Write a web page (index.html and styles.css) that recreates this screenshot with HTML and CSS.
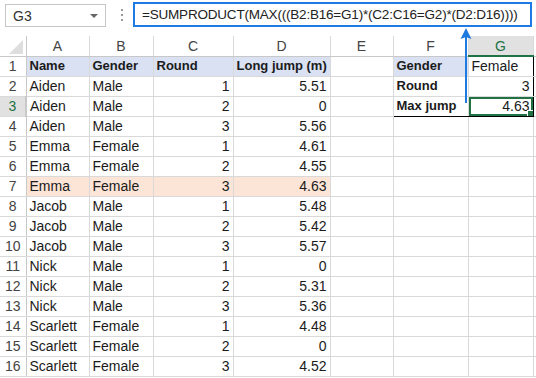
FILE: index.html
```html
<!DOCTYPE html>
<html lang="en">
<head>
    <meta charset="UTF-8">
    <title>Max jump</title>
    <link rel="stylesheet" href="styles.css">
</head>
<body>

<div class="formula-bar">
    <div class="name-box">G3<span class="drop"></span></div>
    <div class="dots"><span></span><span></span><span></span></div>
    <div class="formula">=SUMPRODUCT(MAX(((B2:B16=G1)*(C2:C16=G2)*(D2:D16))))</div>
</div>

<div class="sheet">
<table class="grid">
    <colgroup>
        <col class="c-hdr"><col class="c-a"><col class="c-b"><col class="c-c"><col class="c-d">
        <col class="c-e"><col class="c-f"><col class="c-g"><col class="c-h">
    </colgroup>
    <tr class="col-head">
        <th class="corner"><span></span></th><th>A</th><th>B</th><th>C</th><th>D</th><th>E</th><th>F</th><th class="active-col">G</th><th></th>
    </tr>
    <tr class="head-row">
        <th>1</th><td class="b">Name</td><td class="b">Gender</td><td class="b">Round</td><td class="b">Long jump (m)</td><td class="plain"></td>
        <td class="box b box-top box-left">Gender</td><td class="box box-top box-right">Female</td><td></td>
    </tr>
    <tr>
        <th>2</th><td>Aiden</td><td>Male</td><td class="n">1</td><td class="n">5.51</td><td></td>
        <td class="box b box-left">Round</td><td class="box n box-right">3</td><td></td>
    </tr>
    <tr>
        <th class="active-row">3</th><td>Aiden</td><td>Male</td><td class="n">2</td><td class="n">0</td><td></td>
        <td class="box b box-left box-bottom">Max jump</td><td class="box n box-right box-bottom selected">4.63<span class="handle"></span></td><td></td>
    </tr>
    <tr><th>4</th><td>Aiden</td><td>Male</td><td class="n">3</td><td class="n">5.56</td><td></td><td></td><td></td><td></td></tr>
    <tr><th>5</th><td>Emma</td><td>Female</td><td class="n">1</td><td class="n">4.61</td><td></td><td></td><td></td><td></td></tr>
    <tr><th>6</th><td>Emma</td><td>Female</td><td class="n">2</td><td class="n">4.55</td><td></td><td></td><td></td><td></td></tr>
    <tr class="match"><th>7</th><td>Emma</td><td>Female</td><td class="n">3</td><td class="n">4.63</td><td class="plain"></td><td></td><td></td><td></td></tr>
    <tr><th>8</th><td>Jacob</td><td>Male</td><td class="n">1</td><td class="n">5.48</td><td></td><td></td><td></td><td></td></tr>
    <tr><th>9</th><td>Jacob</td><td>Male</td><td class="n">2</td><td class="n">5.42</td><td></td><td></td><td></td><td></td></tr>
    <tr><th>10</th><td>Jacob</td><td>Male</td><td class="n">3</td><td class="n">5.57</td><td></td><td></td><td></td><td></td></tr>
    <tr><th>11</th><td>Nick</td><td>Male</td><td class="n">1</td><td class="n">0</td><td></td><td></td><td></td><td></td></tr>
    <tr><th>12</th><td>Nick</td><td>Male</td><td class="n">2</td><td class="n">5.31</td><td></td><td></td><td></td><td></td></tr>
    <tr><th>13</th><td>Nick</td><td>Male</td><td class="n">3</td><td class="n">5.36</td><td></td><td></td><td></td><td></td></tr>
    <tr><th>14</th><td>Scarlett</td><td>Female</td><td class="n">1</td><td class="n">4.48</td><td></td><td></td><td></td><td></td></tr>
    <tr><th>15</th><td>Scarlett</td><td>Female</td><td class="n">2</td><td class="n">0</td><td></td><td></td><td></td><td></td></tr>
    <tr><th>16</th><td>Scarlett</td><td>Female</td><td class="n">3</td><td class="n">4.52</td><td></td><td></td><td></td><td></td></tr>
</table>

<!-- arrow pointing from G3 up to the formula -->
<svg class="arrow" width="12" height="76" viewBox="0 0 12 76">
    <line x1="6" y1="8" x2="6" y2="75" stroke="#1f7ae0" stroke-width="2"/>
    <path d="M6 0 L11.5 11 L6 9 L0.5 11 Z" fill="#1f7ae0"/>
</svg>
</div>

</body>
</html>
```

FILE: styles.css
```css
body {
    margin: 0;
    width: 536px;
    height: 378px;
    overflow: hidden;
    background: #fff;
    font-family: "Liberation Sans", Arial, sans-serif;
    font-size: 14px;
    color: #1b1b1b;
}

.formula-bar {
    display: flex;
    align-items: center;
    height: 36px;
    padding-left: 5px;
    box-sizing: border-box;
}

.name-box {
    position: relative;
    width: 101px;
    height: 23px;
    margin-top: -6px;
    border: 1px solid #c6c6c6;
    box-sizing: border-box;
    padding: 3px 0 0 7px;
    color: #333;
}

.drop {
    position: absolute;
    right: 7px;
    top: 9px;
    border-left: 4px solid transparent;
    border-right: 4px solid transparent;
    border-top: 4px solid #666;
}

.dots {
    display: flex;
    flex-direction: column;
    gap: 3px;
    margin: -6px 0 0 15px;
}

.dots span {
    width: 2px;
    height: 2px;
    background: #999;
}

.formula {
    width: 399px;
    height: 25px;
    margin: -8px 0 0 10px;
    border: 2px solid #1e7be3;
    box-sizing: border-box;
    padding: 3px 0 0 7px;
    font-size: 13.5px;
    letter-spacing: -0.2px;
    color: #222;
    white-space: nowrap;
    overflow: hidden;
}

.sheet {
    position: relative;
}

.grid {
    border-collapse: collapse;
    table-layout: fixed;
    width: 546px;
}

.c-hdr { width: 26px; }
.c-a { width: 63px; }
.c-b { width: 64px; }
.c-c { width: 80px; }
.c-d { width: 97px; }
.c-e { width: 63px; }
.c-f { width: 75px; }
.c-g { width: 65px; }
.c-h { width: 13px; }

.grid tr {
    height: 20px;
}

.grid td,
.grid th {
    border: 1px solid #d9d9d9;
    padding: 0 3px;
    white-space: nowrap;
    overflow: hidden;
    font-weight: normal;
    line-height: 18px;
}

.grid th {
    color: #444;
    text-align: center;
    padding: 0;
}

.col-head {
    height: 21px;
}

.col-head th {
    border-top: none;
    border-bottom-color: #c8c8c8;
}

.corner {
    position: relative;
    border-left: none !important;
}

.corner span {
    position: absolute;
    right: 3px;
    bottom: 2px;
    border-left: 14px solid transparent;
    border-bottom: 14px solid #dedede;
}

.grid tr > th:first-child {
    border-left: none;
    border-right-color: #c8c8c8;
}

.active-col {
    background: #e1e1e1;
    color: #217346 !important;
    border-bottom: 2px solid #217346 !important;
}

.grid th.active-row {
    background: #e1e1e1;
    color: #217346;
    border-right: 2px solid #217346;
}

.head-row td.b {
    background: #d9e1f2;
}

.grid td.b {
    font-weight: bold;
    font-size: 13px;
}

.n {
    text-align: right;
}

.match td:not(.plain):nth-child(-n+5) {
    background: #fce4d6;
}

.box-top { border-top: 1px solid #000 !important; }
.box-left { border-left: 1px solid #000 !important; }
.box-right { border-right: 1px solid #000 !important; }
.box-bottom { border-bottom: 1px solid #000 !important; }

.selected {
    position: relative;
    box-shadow: inset 0 0 0 2px #217346;
}

.handle {
    position: absolute;
    right: -1px;
    bottom: -1px;
    width: 5px;
    height: 5px;
    background: #217346;
    border: 1px solid #fff;
}

.arrow {
    position: absolute;
    left: 460px;
    top: -8px;
}
```
